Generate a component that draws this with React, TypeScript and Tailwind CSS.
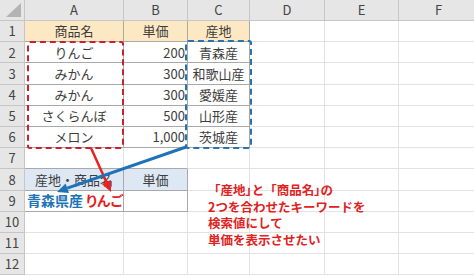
import React from "react";

const cols = ["A", "B", "C", "D", "E", "F"];

type Cell = {
  text?: React.ReactNode;
  align?: "left" | "center" | "right";
  bg?: string;
  dark?: "rb" | "b";
};

const blank: Cell = {};

const rows: Cell[][] = [
  [
    { text: "商品名", align: "center", bg: "bg-[#fde8c4]", dark: "rb" },
    { text: "単価", align: "center", bg: "bg-[#fde8c4]", dark: "rb" },
    { text: "産地", align: "center", bg: "bg-[#fde8c4]", dark: "rb" },
    blank,
    blank,
    blank,
  ],
  ...[
    ["りんご", "200", "青森産"],
    ["みかん", "300", "和歌山産"],
    ["みかん", "300", "愛媛産"],
    ["さくらんぼ", "500", "山形産"],
    ["メロン", "1,000", "茨城産"],
  ].map(([a, b, c]): Cell[] => [
    { text: a, align: "center", dark: "rb" },
    { text: b, align: "right", dark: "rb" },
    { text: c, align: "center", dark: "rb" },
    blank,
    blank,
    blank,
  ]),
  [{ dark: "b" }, { dark: "b" }, blank, blank, blank, blank],
  [
    { text: "産地・商品名", align: "center", bg: "bg-[#dde8f4]", dark: "rb" },
    { text: "単価", align: "center", bg: "bg-[#dde8f4]", dark: "rb" },
    blank,
    blank,
    blank,
    blank,
  ],
  [
    {
      text: (
        <span className="text-[14px] font-bold">
          <span className="text-[#1f74b5]">青森県産</span>{" "}
          <span className="text-[#e3221e] [font-feature-settings:'palt']">りんご</span>
        </span>
      ),
      align: "left",
      dark: "rb",
    },
    { dark: "rb" },
    blank,
    blank,
    blank,
    blank,
  ],
  [blank, blank, blank, blank, blank, blank],
  [blank, blank, blank, blank, blank, blank],
  [blank, blank, blank, blank, blank, blank],
];

function SheetCell({ cell }: { cell: Cell }) {
  const border =
    cell.dark === "rb"
      ? "border-r border-b border-r-[#a9a9a9] border-b-[#a9a9a9]"
      : cell.dark === "b"
        ? "border-r border-b border-r-[#e2e2e2] border-b-[#a9a9a9]"
        : "border-r border-b border-[#e2e2e2]";
  const align =
    cell.align === "center" ? "justify-center" : cell.align === "right" ? "justify-end pr-[2px]" : "justify-start pl-[2px]";
  return (
    <div className={`flex items-center whitespace-nowrap text-[13px] text-[#3d3d3d] ${border} ${align} ${cell.bg ?? "bg-white"}`}>
      {cell.text}
    </div>
  );
}

export default function App() {
  return (
    <div className="relative h-[276px] w-[474px] overflow-hidden bg-white font-['Noto_Sans_CJK_JP',sans-serif]">
      <div className="grid grid-cols-[25px_99px_64px_62px_75px_74px_80px] grid-rows-[21px_repeat(12,21.2px)]">
        <div className="flex items-end justify-end border-r border-b border-[#c6c6c6] bg-[#e6e6e6] p-[3px]">
          <svg width="15" height="14" viewBox="0 0 15 14">
            <polygon points="15,0 15,14 0,14" fill="#b3b3b3" />
          </svg>
        </div>
        {cols.map((c) => (
          <div key={c} className="flex items-center justify-center border-r border-b border-[#c6c6c6] bg-[#e6e6e6] text-[13px] text-[#444]">
            {c}
          </div>
        ))}
        {rows.map((row, i) => (
          <React.Fragment key={i}>
            <div className="flex items-center justify-center border-r border-b border-[#c6c6c6] bg-[#e6e6e6] text-[13px] text-[#444]">
              {i + 1}
            </div>
            {row.map((cell, j) => (
              <SheetCell key={j} cell={cell} />
            ))}
          </React.Fragment>
        ))}
      </div>

      <div className="absolute left-[27px] top-[41px] h-[108px] w-[97px] rounded-[3px] border-2 border-dashed border-[#c9202d]" />
      <div className="absolute left-[185px] top-[40px] h-[109px] w-[67px] rounded-[3px] border-2 border-dashed border-[#2a72ad]" />

      <svg className="absolute left-0 top-0" width="474" height="276" viewBox="0 0 474 276">
        <line x1="91" y1="148" x2="106.4" y2="182" stroke="#e8231f" strokeWidth="2.5" />
        <polygon points="111,192 101.8,184.1 111,179.9" fill="#e8231f" />
        <line x1="186" y1="147" x2="67.3" y2="188.2" stroke="#1f72b6" strokeWidth="3" />
        <polygon points="57,192 65.6,183.5 69,192.9" fill="#1f72b6" />
      </svg>

      <div className="absolute left-[208px] top-[182px] text-[12.5px] font-bold leading-[16.5px] text-[#e0231f]">
        <div>
          「産地<span className="[font-feature-settings:'palt']">」</span>と「商品名<span className="[font-feature-settings:'palt']">」</span>の
        </div>
        <div>2つを合わせたキーワードを</div>
        <div>検索値にして</div>
        <div>単価を表示させたい</div>
      </div>
    </div>
  );
}
